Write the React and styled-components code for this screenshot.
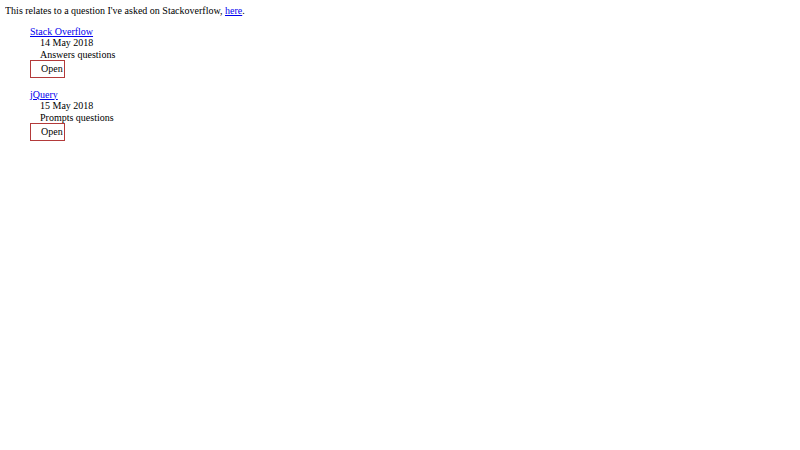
import React from "react";
import styled, { createGlobalStyle } from "styled-components";

const GlobalStyle = createGlobalStyle`
    body {
        margin: 5px;
        background: #fff;
        color: #000;
        font-family: "Liberation Serif", "Times New Roman", serif;
        font-size: 10px;
    }
`;

const Intro = styled.div`
    line-height: 11.5px;
`;

const Link = styled.a`
    color: #0000ee;
    text-decoration: underline;
`;

const Apps = styled.ul`
    list-style: none;
    margin: 9px 0 10px;
    padding-left: 25px;
`;

const AppItem = styled.li`
    display: flex;
    flex-direction: column;
    align-items: flex-start;
    line-height: 11.5px;
    margin-bottom: 10.5px;
`;

const Details = styled.div`
    padding-left: 10px;
`;

const OpenButton = styled.button`
    box-sizing: border-box;
    height: 18px;
    width: 35px;
    padding: 0 0 0 10px;
    text-align: left;
    border: 1px solid #b33a3a;
    background: #fff;
    color: #000;
    font: inherit;
    line-height: 11.5px;
`;

const apps = [
    { name: "Stack Overflow", date: "14 May 2018", desc: "Answers questions" },
    { name: "jQuery", date: "15 May 2018", desc: "Prompts questions" },
];

export default function App() {
    return (
        <>
            <GlobalStyle />
            <Intro>
                This relates to a question I've asked on Stackoverflow, <Link href="#">here</Link>.
            </Intro>
            <Apps>
                {apps.map((app) => (
                    <AppItem key={app.name}>
                        <Link href="#">{app.name}</Link>
                        <Details>
                            <div>{app.date}</div>
                            <div>{app.desc}</div>
                        </Details>
                        <OpenButton>Open</OpenButton>
                    </AppItem>
                ))}
            </Apps>
        </>
    );
}
